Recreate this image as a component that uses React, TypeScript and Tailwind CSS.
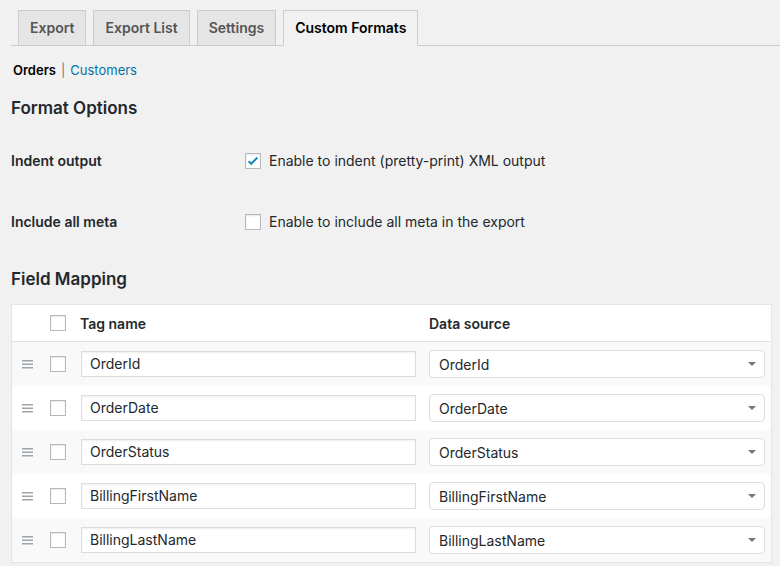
import React from 'react';

const font = { fontFamily: 'Inter, "Noto Sans", sans-serif' };

const tabs = ['Export', 'Export List', 'Settings', 'Custom Formats'];

const fields = [
    'OrderId',
    'OrderDate',
    'OrderStatus',
    'BillingFirstName',
    'BillingLastName',
];

function Checkbox({ checked = false }: { checked?: boolean }) {
    return (
        <span className="flex h-4 w-4 shrink-0 items-center justify-center border border-[#b4b9be] bg-white shadow-[inset_0_1px_2px_rgba(0,0,0,0.1)]">
            {checked && (
                <svg viewBox="0 0 16 16" className="h-[14px] w-[14px]">
                    <path d="M3 8.2l3 3L13 4" fill="none" stroke="#1e8cbe" strokeWidth="2.4" />
                </svg>
            )}
        </span>
    );
}

function DragHandle() {
    return (
        <svg viewBox="0 0 11 9" className="h-[9px] w-[11px]">
            <rect x="0" y="0" width="11" height="1.5" fill="#a0a5aa" />
            <rect x="0" y="3.5" width="11" height="1.5" fill="#a0a5aa" />
            <rect x="0" y="7" width="11" height="1.5" fill="#a0a5aa" />
        </svg>
    );
}

export default function App() {
    return (
        <div className="min-h-[566px] w-[780px] overflow-hidden bg-[#f1f1f1] text-[#23282d]" style={font}>
            {/* nav tabs */}
            <div className="ml-[11px] flex items-end gap-[7px] border-b border-[#ccc] pl-[7px] pt-[10px]">
                {tabs.map((tab, i) => {
                    const active = i === tabs.length - 1;
                    return (
                        <div
                            key={tab}
                            className={
                                active
                                    ? '-mb-px border border-b-[#f1f1f1] border-[#ccc] bg-[#f1f1f1] px-[11px] py-[5px] text-[14px] leading-[24px] font-semibold text-black'
                                    : 'border border-b-0 border-[#ccc] bg-[#e5e5e5] px-[11px] py-[5px] text-[14px] leading-[24px] font-semibold text-[#555]'
                            }
                        >
                            {tab}
                        </div>
                    );
                })}
            </div>

            <div className="pl-[11px] pr-[8px]">
                {/* sub links */}
                <div className="mt-[15px] flex items-center pl-[2px] text-[13px] leading-[18px]">
                    <span className="font-semibold text-black">Orders</span>
                    <span className="mx-[5px] text-[#72777c]">|</span>
                    <span className="text-[#0073aa]">Customers</span>
                </div>

                <h2 className="mt-[18px] text-[17px] leading-[22px] font-semibold">Format Options</h2>

                <div className="mt-[31px] flex items-center">
                    <div className="w-[234px] text-[14px] font-semibold">Indent output</div>
                    <label className="flex items-center gap-[8px] text-[14px]">
                        <Checkbox checked />
                        Enable to indent (pretty-print) XML output
                    </label>
                </div>

                <div className="mt-[40px] flex items-center">
                    <div className="w-[234px] text-[14px] font-semibold">Include all meta</div>
                    <label className="flex items-center gap-[8px] text-[14px]">
                        <Checkbox />
                        Enable to include all meta in the export
                    </label>
                </div>

                <h2 className="mt-[36px] text-[17px] leading-[22px] font-semibold">Field Mapping</h2>

                {/* field mapping table */}
                <div className="mt-[14px] border border-[#e5e5e5] bg-white">
                    <div className="flex h-[37px] items-center border-b border-[#e1e1e1]">
                        <div className="w-[38px]" />
                        <div className="w-[30px]">
                            <Checkbox />
                        </div>
                        <div className="w-[349px] text-[14px] font-semibold">Tag name</div>
                        <div className="text-[14px] font-semibold">Data source</div>
                    </div>
                    {fields.map((field, i) => (
                        <div
                            key={field}
                            className={
                                i % 2 === 0
                                    ? 'flex h-[44px] items-center bg-[#f9f9f9]'
                                    : 'flex h-[44px] items-center bg-white'
                            }
                        >
                            <div className="flex w-[38px] pl-[10px]">
                                <DragHandle />
                            </div>
                            <div className="w-[31px]">
                                <Checkbox />
                            </div>
                            <div className="h-[26px] w-[335px] border border-[#ddd] bg-white px-[8px] text-[14px] leading-[24px] shadow-[inset_0_1px_2px_rgba(0,0,0,0.07)]">
                                {field}
                            </div>
                            <div className="ml-[13px] flex h-[28px] w-[336px] items-center justify-between rounded-[4px] border border-[#ddd] bg-white pl-[9px] pr-[8px] text-[14px]">
                                <span>{field}</span>
                                <svg viewBox="0 0 8 4" className="h-[4px] w-[8px]">
                                    <path d="M0 0h8L4 4z" fill="#777" />
                                </svg>
                            </div>
                        </div>
                    ))}
                </div>
            </div>
        </div>
    );
}
